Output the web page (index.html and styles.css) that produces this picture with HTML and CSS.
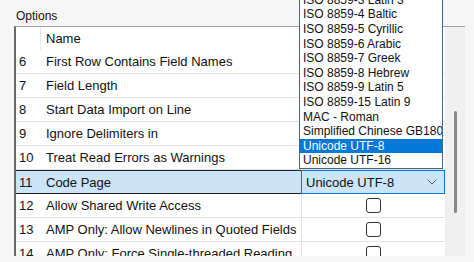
FILE: index.html
```html
<!DOCTYPE html>
<html lang="en">
<head>
    <meta charset="UTF-8">
    <title>Options</title>
    <link rel="stylesheet" href="styles.css">
</head>
<body>
<div class="panel">
    <div class="group-title">Options</div>

    <div class="grid-box">
        <div class="grid-body">
            <div class="row header">
                <div class="cell num"></div>
                <div class="cell name">Name</div>
                <div class="cell value"></div>
            </div>
            <div class="row">
                <div class="cell num">6</div>
                <div class="cell name">First Row Contains Field Names</div>
                <div class="cell value"></div>
            </div>
            <div class="row">
                <div class="cell num">7</div>
                <div class="cell name">Field Length</div>
                <div class="cell value"></div>
            </div>
            <div class="row">
                <div class="cell num">8</div>
                <div class="cell name">Start Data Import on Line</div>
                <div class="cell value"></div>
            </div>
            <div class="row">
                <div class="cell num">9</div>
                <div class="cell name">Ignore Delimiters in</div>
                <div class="cell value"></div>
            </div>
            <div class="row">
                <div class="cell num">10</div>
                <div class="cell name">Treat Read Errors as Warnings</div>
                <div class="cell value"></div>
            </div>
            <div class="row selected">
                <div class="cell num">11</div>
                <div class="cell name">Code Page</div>
                <div class="cell value combo">
                    <span>Unicode UTF-8</span>
                    <svg class="chevron" width="10" height="6" viewBox="0 0 10 6">
                        <path d="M0.5 0.5 L5 5 L9.5 0.5" fill="none" stroke="#606060" stroke-width="1"/>
                    </svg>
                </div>
            </div>
            <div class="row">
                <div class="cell num">12</div>
                <div class="cell name">Allow Shared Write Access</div>
                <div class="cell value"><span class="checkbox"></span></div>
            </div>
            <div class="row">
                <div class="cell num">13</div>
                <div class="cell name">AMP Only: Allow Newlines in Quoted Fields</div>
                <div class="cell value"><span class="checkbox"></span></div>
            </div>
            <div class="row">
                <div class="cell num">14</div>
                <div class="cell name">AMP Only: Force Single-threaded Reading</div>
                <div class="cell value"><span class="checkbox"></span></div>
            </div>
        </div>

        <div class="scrollbar"><div class="thumb"></div></div>

        <!-- открытый список кодировок -->
        <ul class="dropdown">
            <li>ISO 8859-2 Central European</li>
            <li>ISO 8859-3 Latin 3</li>
            <li>ISO 8859-4 Baltic</li>
            <li>ISO 8859-5 Cyrillic</li>
            <li>ISO 8859-6 Arabic</li>
            <li>ISO 8859-7 Greek</li>
            <li>ISO 8859-8 Hebrew</li>
            <li>ISO 8859-9 Latin 5</li>
            <li>ISO 8859-15 Latin 9</li>
            <li>MAC - Roman</li>
            <li>Simplified Chinese GB18030</li>
            <li class="active">Unicode UTF-8</li>
            <li>Unicode UTF-16</li>
        </ul>
    </div>
</div>
</body>
</html>
```

FILE: styles.css
```css
body {
    margin: 0;
    font-family: "Liberation Sans", Arial, sans-serif;
    background-color: #f6f6f6;
    color: #111;
    overflow: hidden;
    height: 262px;
}

.panel {
    padding-left: 14px;
}

.group-title {
    font-size: 12px;
    line-height: 18px;
    padding-top: 7px;
    padding-left: 2px;
    height: 19px;
    box-sizing: border-box;
    height: 26px;
}

.grid-box {
    position: relative;
    display: flex;
    width: 451px;
    height: 230px;
    box-sizing: border-box;
    border-left: 2px solid #6a6a6a;
    border-top: 1px solid #a0a0a0;
    background-color: #fff;
}

.grid-body {
    width: 429px;
    overflow: hidden;
}

.row {
    display: grid;
    grid-template-columns: 25px 260px 1fr;
    height: 24px;
    font-size: 13px;
}

.row.header {
    height: 23px;
}

.cell {
    box-sizing: border-box;
    display: flex;
    align-items: center;
    white-space: nowrap;
    overflow: hidden;
    border-bottom: 1px solid #e4e4e4;
}

.num {
    padding-left: 3px;
}

.name {
    padding-left: 5px;
}

.value {
    border-left: 1px solid #e4e4e4;
    padding-left: 4px;
}

.header .cell {
    border-bottom: none;
}

.header .num {
    border-right: 1px solid #e8e8e8;
}

.header .value {
    border-left: none;
}

/* выбранная строка */
.selected .cell {
    background-color: #cce4f7;
    border-top: 1px solid #1f1f1f;
    border-bottom: 1px solid #1f1f1f;
}

.selected .value.combo {
    border: 1px solid #0078d7;
    justify-content: space-between;
    padding-right: 7px;
}

.checkbox {
    display: block;
    width: 13px;
    height: 13px;
    margin: 0 auto;
    border: 1px solid #333;
    border-radius: 3px;
    background-color: #fff;
    position: relative;
    left: -2px;
}

.scrollbar {
    width: 20px;
    background-color: #f0f0f0;
    position: relative;
}

.thumb {
    position: absolute;
    left: 9px;
    top: 84px;
    width: 3px;
    height: 102px;
    border-radius: 2px;
    background-color: #8a8a8a;
}

/* выпадающий список */
.dropdown {
    position: absolute;
    left: 283px;
    bottom: 87px;
    width: 144px;
    margin: 0;
    padding: 0;
    list-style: none;
    background-color: #fff;
    border: 1px solid #3d6690;
    font-size: 12px;
    box-sizing: border-box;
}

.dropdown li {
    height: 14.6px;
    line-height: 14.6px;
    padding-left: 3px;
    white-space: nowrap;
    overflow: hidden;
}

.dropdown li.active {
    background-color: #0078d7;
    color: #fff;
}
```
